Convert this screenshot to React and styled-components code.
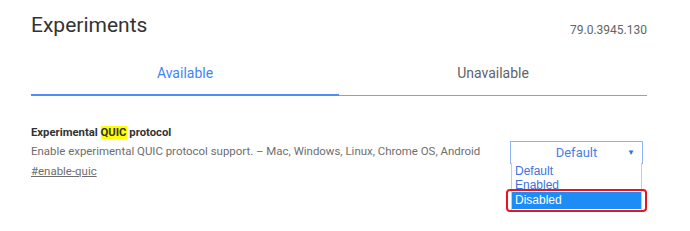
import React from "react";
import styled, { createGlobalStyle } from "styled-components";

const Global = createGlobalStyle`
  html, body { margin: 0; padding: 0; background: #fff; }
  body { font-family: Roboto, "Noto Sans", Arial, sans-serif; }
`;

const Page = styled.div`
  width: 616px;
  min-height: 231px;
  padding-left: 31px;
`;

const Header = styled.header`
  display: flex;
  justify-content: space-between;
  align-items: baseline;
  padding-top: 9px;
`;

const Title = styled.h1`
  margin: 0;
  font-size: 21px;
  line-height: 32px;
  font-weight: 400;
  color: #333;
`;

const Version = styled.span`
  font-size: 12px;
  color: #5f6368;
  position: relative;
  top: 2px;
`;

const Tabs = styled.div`
  display: grid;
  grid-template-columns: 1fr 1fr;
  margin-top: 15px;
`;

const Tab = styled.div`
  text-align: center;
  font-size: 14px;
  line-height: 20px;
  padding-top: 7px;
  padding-bottom: ${(p) => (p.$active ? "11px" : "12px")};
  color: ${(p) => (p.$active ? "#4285f4" : "#5f6368")};
  border-bottom: ${(p) => (p.$active ? "2px solid #4d8ef7" : "1px solid #9e9e9e")};
`;

const Experiment = styled.div`
  display: flex;
  justify-content: space-between;
  align-items: flex-start;
  margin-top: 28px;
`;

const Info = styled.div`
  display: flex;
  flex-direction: column;
  white-space: nowrap;
`;

const Name = styled.div`
  font-size: 11.3px;
  font-weight: 700;
  line-height: 18px;
  color: #333;
`;

const Mark = styled.mark`
  background: #ffff00;
  color: inherit;
`;

const Desc = styled.div`
  font-size: 11.45px;
  line-height: 19px;
  color: #6e6e6e;
`;

const Link = styled.a`
  font-size: 11.45px;
  line-height: 20px;
  color: #6e6e6e;
  text-decoration: underline;
`;

const SelectWrap = styled.div`
  position: relative;
  flex-shrink: 0;
  width: 133px;
  margin-right: 4px;
  margin-top: 17px;
`;

const SelectBox = styled.div`
  box-sizing: border-box;
  height: 23px;
  border: 1px solid #8fb4f5;
  display: flex;
  align-items: center;
  justify-content: center;
  font-size: 13px;
  color: #4a7ee6;
  position: relative;
`;

const Arrow = styled.span`
  position: absolute;
  right: 7px;
  top: 6px;
  font-size: 8px;
  color: #3b6fd8;
`;

const List = styled.ul`
  position: absolute;
  top: 22px;
  left: 1px;
  width: 131px;
  box-sizing: border-box;
  margin: 0;
  padding: 1px 0 2px;
  list-style: none;
  background: #fff;
  border-left: 1px solid #b8cdf0;
  border-right: 1px solid #b8cdf0;
  font-family: "Liberation Sans", Arial, sans-serif;
  font-size: 12px;
`;

const Item = styled.li`
  line-height: 14px;
  padding: 0 3px;
  color: ${(p) => (p.$selected ? "#fff" : "#3f72dc")};
  background: ${(p) => (p.$selected ? "#1e8cf5" : "transparent")};
  ${(p) => p.$selected && "line-height: 17px; margin-top: 0px;"}
`;

const Highlight = styled.div`
  position: absolute;
  left: -4px;
  right: -4px;
  top: 48px;
  height: 23px;
  box-sizing: border-box;
  border: 2px solid #e8141e;
  border-radius: 4px;
  pointer-events: none;
`;

export default function App() {
  return (
    <>
      <Global />
      <Page>
        <Header>
          <Title>Experiments</Title>
          <Version>79.0.3945.130</Version>
        </Header>
        <Tabs>
          <Tab $active>Available</Tab>
          <Tab>Unavailable</Tab>
        </Tabs>
        <Experiment>
          <Info>
            <Name>
              Experimental <Mark>QUIC</Mark> protocol
            </Name>
            <Desc>
              Enable experimental QUIC protocol support. – Mac, Windows, Linux, Chrome OS, Android
            </Desc>
            <Link href="#enable-quic">#enable-quic</Link>
          </Info>
          <SelectWrap>
            <SelectBox>
              Default
              <Arrow>▼</Arrow>
            </SelectBox>
            <List>
              <Item>Default</Item>
              <Item>Enabled</Item>
              <Item $selected>Disabled</Item>
            </List>
            <Highlight />
          </SelectWrap>
        </Experiment>
      </Page>
    </>
  );
}
